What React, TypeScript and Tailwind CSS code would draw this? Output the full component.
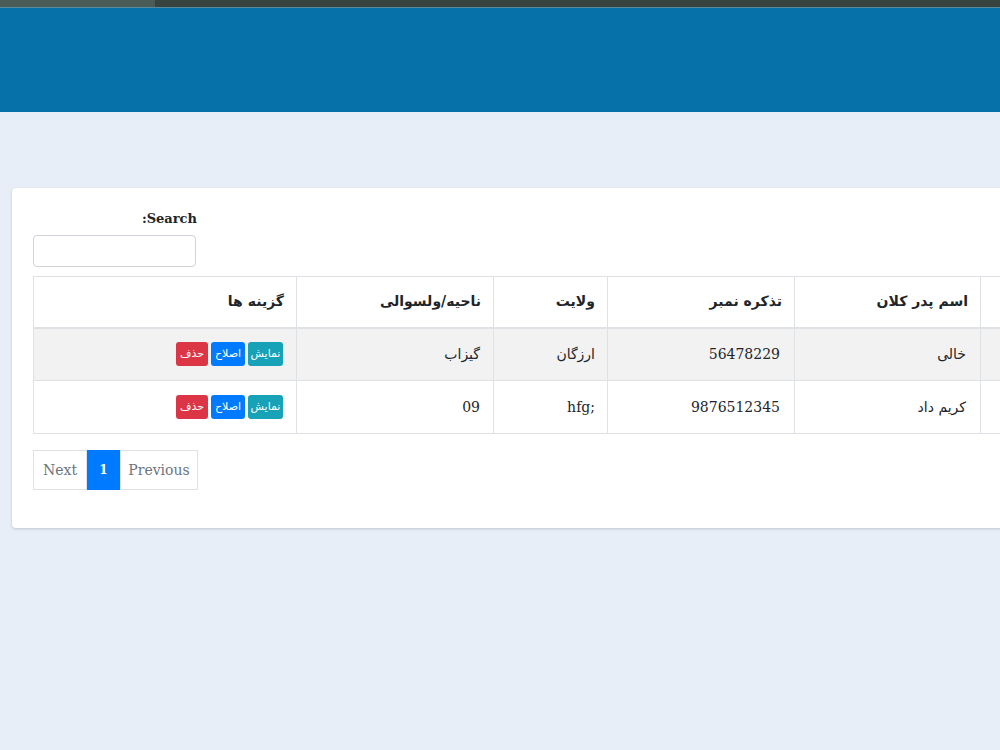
import React from "react";

const font = { fontFamily: '"DejaVu Serif", "DejaVu Sans", "Noto Sans", serif' };

const rows = [
  { c1: "خالی", c2: "56478229", c3: "ارزگان", c4: "گیزاب", striped: true },
  { c1: "کریم داد", c2: "9876512345", c3: ";hfg", c4: "09", striped: false },
];

export default function App() {
  return (
    <div className="w-[1000px] h-[750px] overflow-hidden bg-[#e8eef8] flex flex-col" style={font}>
      <div className="h-[7px] flex">
        <div className="w-[155px] bg-[#4b5b57]" />
        <div className="flex-1 bg-[#38423f]" />
      </div>
      <div className="h-[1px] bg-[#5a8a9a]" />
      <div className="h-[104px] bg-[#0670a9]" />
      <div className="pt-[76px] pl-[12px]">
        <div className="w-[1069px] bg-white rounded-[4px] shadow-[0_1px_3px_rgba(0,0,0,0.18)] pl-[21px] pt-[22px] pb-[38px]">
          <div className="w-[164px] flex flex-col items-start">
            <div dir="ltr" className="w-full text-right text-[13px] font-bold text-[#212529] leading-[18px]">:Search</div>
            <input className="mt-[7px] w-[163px] h-[32px] border border-[#ced4da] rounded-[4px] bg-white outline-none" />
          </div>
          <table dir="rtl" className="mt-[9px] w-[1027px] border-collapse table-fixed text-[#212529]">
            <colgroup>
              <col className="w-[80px]" />
              <col className="w-[186px]" />
              <col className="w-[187px]" />
              <col className="w-[114px]" />
              <col className="w-[197px]" />
              <col className="w-[263px]" />
            </colgroup>
            <thead>
              <tr className="h-[51px]">
                {["", "اسم پدر کلان", "تذکره نمبر", "ولایت", "ناحیه/ولسوالی", "گزینه ها"].map((h, i) => (
                  <th
                    key={i}
                    className="border border-[#dee2e6] border-b-2 text-right font-bold text-[14px] px-[12px] align-middle"
                  >
                    {h}
                  </th>
                ))}
              </tr>
            </thead>
            <tbody>
              {rows.map((r, i) => (
                <tr key={i} className={`h-[53px] ${r.striped ? "bg-[#f2f2f2]" : "bg-white"}`}>
                  <td className="border border-[#dee2e6] px-[12px] text-right text-[14px]"></td>
                  <td className="border border-[#dee2e6] px-[14px] text-right text-[14px]">{r.c1}</td>
                  <td className="border border-[#dee2e6] px-[14px] text-right text-[14px]">{r.c2}</td>
                  <td className="border border-[#dee2e6] px-[12px] text-right text-[14px]">{r.c3}</td>
                  <td className="border border-[#dee2e6] px-[13px] text-right text-[14px]">{r.c4}</td>
                  <td className="border border-[#dee2e6] px-[13px]">
                    <div className="flex gap-[3px] items-center">
                      <span className="h-[24px] w-[35px] flex items-center justify-center rounded-[3px] bg-[#17a2b8] text-white text-[11px]">
                        نمایش
                      </span>
                      <span className="h-[24px] w-[34px] flex items-center justify-center rounded-[3px] bg-[#007bff] text-white text-[11px]">
                        اصلاح
                      </span>
                      <span className="h-[24px] w-[32px] flex items-center justify-center rounded-[3px] bg-[#dc3545] text-white text-[11px]">
                        حذف
                      </span>
                    </div>
                  </td>
                </tr>
              ))}
            </tbody>
          </table>
          <div className="mt-[16px] flex" dir="ltr">
            <div className="h-[40px] w-[54px] flex items-center justify-center border border-[#dee2e6] text-[#6c757d] text-[14px]">
              Next
            </div>
            <div className="h-[40px] w-[33px] flex items-center justify-center bg-[#007bff] border border-[#007bff] text-white text-[12px] font-bold">
              1
            </div>
            <div className="h-[40px] w-[78px] flex items-center justify-center border border-[#dee2e6] text-[#6c757d] text-[14px]">
              Previous
            </div>
          </div>
        </div>
      </div>
    </div>
  );
}
